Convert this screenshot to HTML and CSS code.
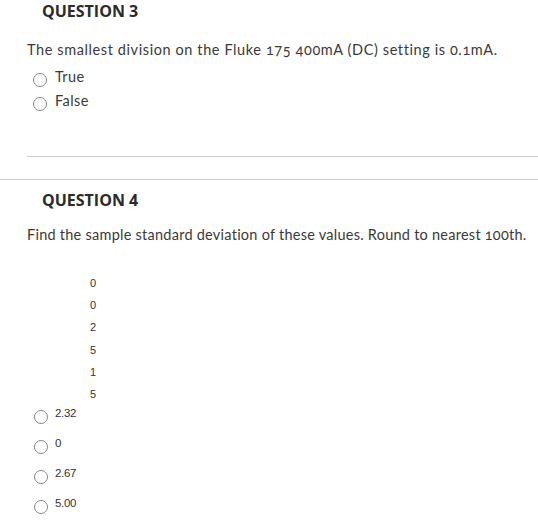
FILE: index.html
```html
<!DOCTYPE html>
<html>
<head>
<meta charset="utf-8">
<link rel="stylesheet" href="styles.css">
</head>
<body>
<section class="q q3">
  <h2 class="qtitle">QUESTION 3</h2>
  <p class="qtext">The smallest division on the Fluke 175 400mA (DC) setting is 0.1mA.</p>
  <ul class="choices">
    <li class="choice"><span class="radio"></span><span class="label">True</span></li>
    <li class="choice"><span class="radio"></span><span class="label">False</span></li>
  </ul>
  <hr class="inner-rule">
</section>
<hr class="outer-rule">
<section class="q q4">
  <h2 class="qtitle">QUESTION 4</h2>
  <p class="qtext">Find the sample standard deviation of these values. Round to nearest 100th.</p>
  <ul class="values">
    <li>0</li>
    <li>0</li>
    <li>2</li>
    <li>5</li>
    <li>1</li>
    <li>5</li>
  </ul>
  <ul class="answers">
    <li class="answer"><span class="radio"></span><span class="alabel">2.32</span></li>
    <li class="answer"><span class="radio"></span><span class="alabel">0</span></li>
    <li class="answer"><span class="radio"></span><span class="alabel">2.67</span></li>
    <li class="answer"><span class="radio"></span><span class="alabel">5.00</span></li>
  </ul>
</section>
</body>
</html>
```
FILE: styles.css
```css
html, body {
  margin: 0;
  padding: 0;
  background: #fff;
}
body {
  font-family: Lato, "Open Sans", sans-serif;
  color: #3a3a3a;
  width: 538px;
}
.qtitle {
  margin: 0;
  padding-left: 42px;
  font-family: "Open Sans", sans-serif;
  font-weight: 700;
  font-size: 16px;
  line-height: 22px;
  color: #2b2b2b;
}
.qtext {
  margin: 0;
  padding-left: 27px;
  font-size: 14.5px;
  line-height: 20px;
  letter-spacing: 0.6px;
  font-variant-numeric: oldstyle-nums;
  white-space: nowrap;
}
.q3 .qtext {
  margin-top: 18px;
}
.q4 .qtext {
  margin-top: 14px;
  letter-spacing: 0.25px;
}
.choices {
  list-style: none;
  margin: 5px 0 0;
  padding: 0 0 0 33px;
}
.choice {
  display: flex;
  align-items: center;
  height: 24px;
  gap: 8px;
}
.radio {
  display: inline-block;
  box-sizing: border-box;
  width: 14px;
  height: 14px;
  border: 1px solid #8a8a8a;
  border-radius: 50%;
  background: #fff;
  flex: none;
}
.choice .radio {
  margin-top: 5px;
}
.label {
  font-size: 14.5px;
  line-height: 20px;
  letter-spacing: 0.4px;
}
.inner-rule {
  border: 0;
  border-top: 1px solid #cccccc;
  margin: 43px 0 0 27px;
  height: 0;
}
.outer-rule {
  border: 0;
  border-top: 1px solid #cccccc;
  margin: 22px 0 0 0;
  height: 0;
}
.q4 .qtitle {
  margin-top: 9px;
}
.values {
  list-style: none;
  margin: 27px 0 0;
  padding: 0 0 0 90px;
  font-family: "Liberation Sans", Arial, sans-serif;
  font-size: 11px;
  color: #333;
}
.values li {
  height: 22.2px;
  line-height: 22.2px;
}
.answers {
  list-style: none;
  margin: 1px 0 0;
  padding: 0 0 0 34px;
}
.answer {
  display: flex;
  align-items: flex-start;
  gap: 7px;
  height: 30px;
}
.answer .radio {
  margin-top: 4px;
}
.alabel {
  font-family: "Liberation Sans", Arial, sans-serif;
  font-size: 11.5px;
  line-height: 14px;
  color: #333;
  letter-spacing: -0.3px;
}
```
